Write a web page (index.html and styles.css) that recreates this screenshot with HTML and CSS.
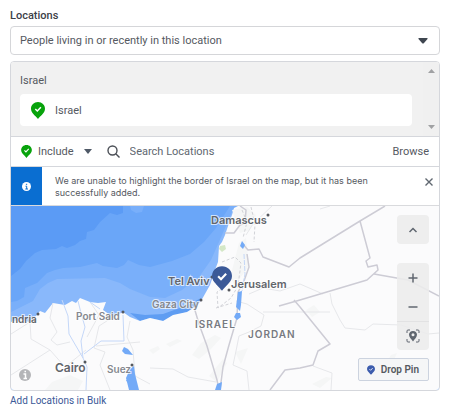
FILE: index.html
```html
<!DOCTYPE html>
<html lang="en">
<head>
<meta charset="utf-8">
<title>Locations</title>
<link rel="stylesheet" href="styles.css">
</head>
<body>
<svg class="defs" aria-hidden="true">
  <symbol id="pin" viewBox="0 0 14 17">
    <path d="M7 0C3 0 0 3 0 6.700C0 11 4.500 13.500 7 17C9.500 13.500 14 11 14 6.700C14 3 11 0 7 0Z" fill="currentColor"/>
    <path d="M4.300 7L6.300 9L9.900 5.200" fill="none" stroke="#fff" stroke-width="1.500"/>
  </symbol>
</svg>
<main class="targeting">
  <label class="heading" for="mode">Locations</label>
  <div class="mode">
    <select id="mode"><option>People living in or recently in this location</option></select>
    <svg class="mode-arrow" viewBox="0 0 10 6" aria-hidden="true"><path d="M1 0H9Q10 0 9.500 1L6 5Q5 6 4 5L.5 1Q0 0 1 0Z"/></svg>
  </div>

  <section class="panel">
    <div class="selected">
      <div class="selected-list">
        <div class="group">Israel</div>
        <div class="chip"><svg class="chip-pin"><use href="#pin"/></svg>Israel</div>
      </div>
      <div class="scroller" aria-hidden="true">
        <svg viewBox="0 0 7 4"><path d="M0 4L3.500 0L7 4Z"/></svg>
        <svg viewBox="0 0 7 4"><path d="M0 0L3.500 4L7 0Z"/></svg>
      </div>
    </div>

    <div class="toolbar">
      <button class="include" type="button"><svg class="include-pin"><use href="#pin"/></svg>Include<svg class="include-arrow" viewBox="0 0 8 5"><path d="M0 0H8L4 5Z"/></svg></button>
      <label class="search">
        <svg class="search-icon" viewBox="0 0 13 13" role="img" aria-label="Search"><circle cx="5.500" cy="5.500" r="4.500"/><path d="M8.800 8.800L12.500 12.500"/></svg>
        <input type="text" placeholder="Search Locations">
      </label>
      <button class="browse" type="button">Browse</button>
    </div>

    <div class="notice">
      <div class="notice-mark"><svg viewBox="0 0 9 9"><circle cx="4.500" cy="4.500" r="4.500" fill="#fff"/><path d="M3.500 4.200H4.700V7M3.300 7H6M3.900 2.300H5.200" fill="none" stroke="#0a6ed1" stroke-width="1"/></svg></div>
      <p>We are unable to highlight the border of Israel on the map, but it has been successfully added.</p>
      <button class="close" type="button" aria-label="Close"><svg viewBox="0 0 8 8"><path d="M.5 .5L7.500 7.500M7.500 .5L.5 7.500"/></svg></button>
    </div>

    <div class="map">
      <svg class="map-art" viewBox="11 206 428 184" preserveAspectRatio="xMidYMid slice">
        <rect x="11" y="206" width="428" height="184" fill="#6aa6f8"/>
        <path fill="#5b9bf5" d="M11 206H123V213L117 215L110 213L100 222L94 230L87 232L86 239L80 241L75 245L67 248L62 246L56 249L42 250L35 253L26 261L20 269L11 276Z"/>
        <path fill="#79affa" d="M130 206H144L142 212L136 213L131 210ZM11 302L17 301L24 297L25 288L37 283L47 273L55 270L63 268L80 267L97 263L103 266L117 268L124 265L128 260L139 265L150 267L172 261L190 254L204 242L216 228L230 206H240V330H11Z"/>
        <path fill="#89b8fb" d="M11 312L33 301L40 289L48 283L57 279L105 278L120 283L130 289L150 297L165 298L182 290L199 277L211 260L222 235L232 212L240 240V330H11Z"/>
        <path fill="#5f9df2" d="M130 313L145 315L163 314L188 305L201 298L195 307L187 312L173 316L164 321L150 318L140 321Z"/>
        <path fill="#fbfbfc" d="M11 322L20 319L29 322L37 315L40 311L45 313L53 303L65 305L72 301L76 303L80 298L90 302L98 303L106 302L103 310L113 317L123 312L130 317L140 321L150 318L163 321L173 315L187 312L195 307L201 301L210 285L215 270L218 262L219 246L222 242L225 235L229 223L232 215L234 208L238 206H439V390H11Z"/>
        <g fill="#f5f6f6">
          <path d="M52 382L70 375L83 381L78 390H45ZM149 350L158 346L160 349L153 354ZM166 344L177 339L182 341L170 347ZM192 355L201 343L215 335L221 338L210 350L199 359ZM209 376L223 359L227 363L217 382ZM232 210L247 207L256 215L250 230L240 233ZM239 243L246 238L249 266L235 285L230 278ZM235 352L248 348L241 364ZM312 384L326 377L332 378L320 388ZM375 380L391 355L397 353L386 378ZM306 310L314 305L320 312L312 317Z"/>
        </g>
        <path fill="#d4e7c7" d="M220 246L225 245L226 249L222 252L219 249Z"/>
        <g fill="none" stroke="#e6e7ea" stroke-width="1">
          <path d="M11 334L30 322M30 322L31 339L50 350L65 367L86 350M50 350L11 375M53 303L50 318L57 332L51 340L57 345L70 342M90 302L99 315L87 337M113 317L99 326L94 348L105 352L100 365L110 390M130 321L127 337L133 350L135 376L150 384M96 346L140 342M150 368L173 369L188 377L216 382M236 301L247 304L264 315L261 326L249 332L239 336L236 351L233 365L247 371L249 390M300 284L323 294M330 293L332 304L340 320L345 328L365 330L373 324L401 325L428 334L439 333M263 312H330M313 366L332 373L331 390M272 206L253 224L246 235M300 284L280 291L263 288L249 294M320 209L330 206"/>
        </g>
        <g fill="none" stroke="#d2d3d8" stroke-width="1" stroke-dasharray="3 2">
          <path d="M222 262L235 257L241 263L238 286L231 298L218 308L217 292L223 288M242 210L247 222L243 238M251 207L255 224L254 242M216 308L232 303"/>
        </g>
        <g fill="none" stroke="#cdccd5" stroke-width="1.500" stroke-linejoin="round">
          <path d="M225 233H234L240 225L245 223L246 210L240 206M242 243L248 250L259 249L263 257L289 267L300 258L360 221L385 206M360 221L370 258L366 261L368 267L377 265L378 270L367 280L300 300L279 306M294 300L300 307L330 344L318 351L313 365L300 368L285 370L270 390M374 274L408 280L439 296M247 254L249 267L244 281L238 292L237 318L229 345L223 367L220 390M194 307L199 324L207 346L217 380L219 390"/>
        </g>
        <g fill="none" stroke="#c4d7f8" stroke-width="1">
          <path d="M62 300L68 316L69 334L83 358L87 367L86 390M83 358L81 341L85 327L81 313L78 301M84 354L101 341L124 341L123 315M90 302L100 309"/>
          <path d="M244 254L245 274L242 291" stroke-dasharray="5 1"/>
        </g>
        <path fill="#73aaf7" d="M242 241L245 245L243 249L240 246ZM238 292L242 291L241 305L240 311L236 307ZM236 313L240 313L241 317L237 320L234 317ZM124 347L128 349L133 355L125 354L122 351ZM126 378L130 369L134 366L135 374L139 390H129ZM215 390L217 384L222 382L221 390ZM130 369L133 374L130 378L134 385L126 381Z"/>
        <g class="dots">
          <circle cx="268" cy="215" r="1.500"/><circle cx="212" cy="277" r="1.500"/><circle cx="229" cy="290" r="1.500"/><circle cx="201" cy="300" r="1.500"/><circle cx="38" cy="314" r="1.500"/><circle cx="123" cy="312" r="1.500"/><circle cx="85" cy="362" r="1.500"/><circle cx="132" cy="365" r="1.500"/>
        </g>
        <g class="places">
          <text x="211" y="224">Damascus</text>
          <text x="168" y="285">Tel Aviv</text>
          <text x="231" y="288">Jerusalem</text>
          <text class="minor" x="152" y="308">Gaza City</text>
          <text class="edge" x="12" y="323">ndria</text>
          <text class="minor" x="76" y="320">Port Said</text>
          <text class="city" x="55" y="372">Cairo</text>
          <text class="minor" x="107" y="373">Suez</text>
          <text class="country" x="195" y="328">ISRAEL</text>
          <text class="country" x="248" y="338">JORDAN</text>
        </g>
        <use class="marker" href="#pin" x="212" y="266" width="20" height="25"/>
        <circle cx="25" cy="375" r="6" fill="#b4b5b8"/>
        <path d="M23.500 374H25.500V378M23.500 378.500H27M24.500 371.500H26" fill="none" stroke="#fff" stroke-width="1.500"/>
      </svg>

      <div class="controls">
        <button class="control up" type="button" aria-label="Collapse map"><svg viewBox="0 0 12 12"><path d="M2.500 8L6 4.500L9.500 8"/></svg></button>
        <button class="control top" type="button" aria-label="Zoom in"><svg viewBox="0 0 12 12"><path d="M6 1.500V10.500M1.500 6H10.500"/></svg></button>
        <button class="control mid" type="button" aria-label="Zoom out"><svg viewBox="0 0 12 12"><path d="M1.500 6H10.500"/></svg></button>
        <button class="control end" type="button" aria-label="Locate"><svg class="locate" viewBox="0 0 14 14"><path d="M1 4V2Q1 1 2 1H4M10 1H12Q13 1 13 2V4M13 10V12Q13 13 12 13H10M4 13H2Q1 13 1 12V10"/><path class="locate-pin" d="M7 2C4.700 2 3 3.700 3 5.800C3 8.500 5.500 10 7 12.500C8.500 10 11 8.500 11 5.800C11 3.700 9.300 2 7 2ZM7 4.300A1.500 1.500 0 1 1 7 7.300A1.500 1.500 0 1 1 7 4.300Z"/></svg></button>
      </div>
      <button class="drop" type="button"><svg><use href="#pin"/></svg>Drop Pin</button>
    </div>
  </section>
  <a class="bulk" href="#">Add Locations in Bulk</a>
</main>
</body>
</html>
```
FILE: styles.css
```css
* { box-sizing: border-box; }
body {
  margin: 0;
  background: #fff;
  color: #55595f;
  font: 11px/14px Roboto, "Liberation Sans", sans-serif;
}
button, input, select { font: inherit; color: inherit; }
button { border: 0; padding: 0; background: none; cursor: pointer; }
svg { display: block; flex: none; }
.defs { position: absolute; width: 0; height: 0; }
.targeting { padding: 9px 9px 4px 10px; }

.heading { display: block; margin-bottom: 3px; font-weight: 500; color: #3c4047; }
.mode { position: relative; margin-bottom: 6px; }
.mode select {
  display: block;
  width: 100%;
  height: 29px;
  padding: 0 30px 0 9px;
  border: 1px solid #d5d6d9;
  border-radius: 4px;
  background: #fff;
  appearance: none;
}
.mode-arrow { position: absolute; right: 12px; top: 12px; width: 10px; height: 6px; fill: #3f4650; }

.panel { border: 1px solid #d5d7dc; border-radius: 4px; overflow: hidden; }
.selected { display: flex; justify-content: space-between; height: 74px; background: #f1f1f1; }
.selected-list { flex: 1; padding: 12px 11px 0 9px; }
.group { margin-bottom: 6px; }
.chip {
  display: flex;
  align-items: center;
  gap: 10px;
  height: 32px;
  padding: 1px 0 0 11px;
  border-radius: 4px;
  background: #fff;
}
.chip-pin { width: 14px; height: 17px; color: #08a30c; }
.scroller {
  display: flex;
  flex-direction: column;
  justify-content: space-between;
  align-items: center;
  width: 16px;
  padding: 7px 0;
  background: #f0f0f0;
}
.scroller svg { width: 7px; height: 4px; fill: #a0a1a3; }

.toolbar {
  display: flex;
  align-items: center;
  height: 31px;
  padding: 0 10px;
  border-top: 1px solid #d5d7dc;
  border-bottom: 1px solid #d5d7dc;
}
.include { display: flex; align-items: center; gap: 6px; margin-right: 15px; }
.include-pin { width: 11px; height: 13px; color: #08a30c; }
.include-arrow { width: 8px; height: 5px; margin-left: 4px; fill: #4f5967; }
.search { display: flex; flex: 1; align-items: center; gap: 10px; min-width: 0; }
.search-icon { width: 13px; height: 13px; fill: none; stroke: #4b4f56; stroke-width: 1.4; }
.search input { flex: 1; min-width: 0; border: 0; padding: 0; outline: 0; background: none; }
.search input::placeholder { color: #606770; opacity: 1; }

.notice { display: flex; height: 39px; border-bottom: 1px solid #d9dadd; font: 9px/12px Inter, "Liberation Sans", sans-serif; }
.notice-mark { display: flex; align-items: center; justify-content: center; width: 31px; background: #0a6ed1; }
.notice-mark svg { width: 9px; height: 9px; }
.notice p { flex: 1; margin: 0; padding: 8px 28px 0 13px; }
.close { align-self: flex-start; padding: 11px 6px 0 0; }
.close svg { width: 8px; height: 8px; stroke: #606770; stroke-width: 1.4; }

.map { position: relative; }
.map-art { width: 100%; height: 184px; }
.dots { fill: #55585d; }
.places {
  font: 600 11px Inter, "Liberation Sans", sans-serif;
  fill: #62656b;
  stroke: #fff;
  stroke-opacity: .7;
  stroke-width: 2px;
  paint-order: stroke;
}
.places .minor { font-size: 10px; fill: #85888e; }
.places .edge { font-size: 10px; }
.places .city { font-size: 12px; }
.places .country { font-size: 10px; letter-spacing: 1px; fill: #777a81; }
.marker { color: #3b5998; }
.controls { position: absolute; top: 9px; right: 10px; display: flex; flex-direction: column; }
.control {
  display: flex;
  align-items: center;
  justify-content: center;
  width: 32px;
  height: 29px;
  background: rgba(236, 236, 236, .88);
}
.control svg { width: 12px; height: 12px; fill: none; stroke: #606770; stroke-width: 1.5; }
.control .locate { width: 14px; height: 14px; stroke-width: 1; }
.control .locate-pin { fill: #606770; fill-rule: evenodd; stroke: none; }
.up { margin-bottom: 19px; border-radius: 4px; }
.top { border-radius: 4px 4px 0 0; }
.end { border-radius: 0 0 4px 4px; border-top: 1px solid #e2e2e3; }
.drop {
  position: absolute;
  right: 10px;
  bottom: 9px;
  display: flex;
  align-items: center;
  gap: 6px;
  height: 23px;
  padding: 0 9px 0 8px;
  border: 1px solid #ccd3df;
  border-radius: 2px;
  background: #f5f6f7;
  font: 600 10px/12px Roboto, "Liberation Sans", sans-serif;
}
.drop svg { width: 8px; height: 10px; color: #3c5cad; }
.bulk { display: block; margin-top: 3px; font-size: 10px; color: #3b5998; text-decoration: none; }
```
